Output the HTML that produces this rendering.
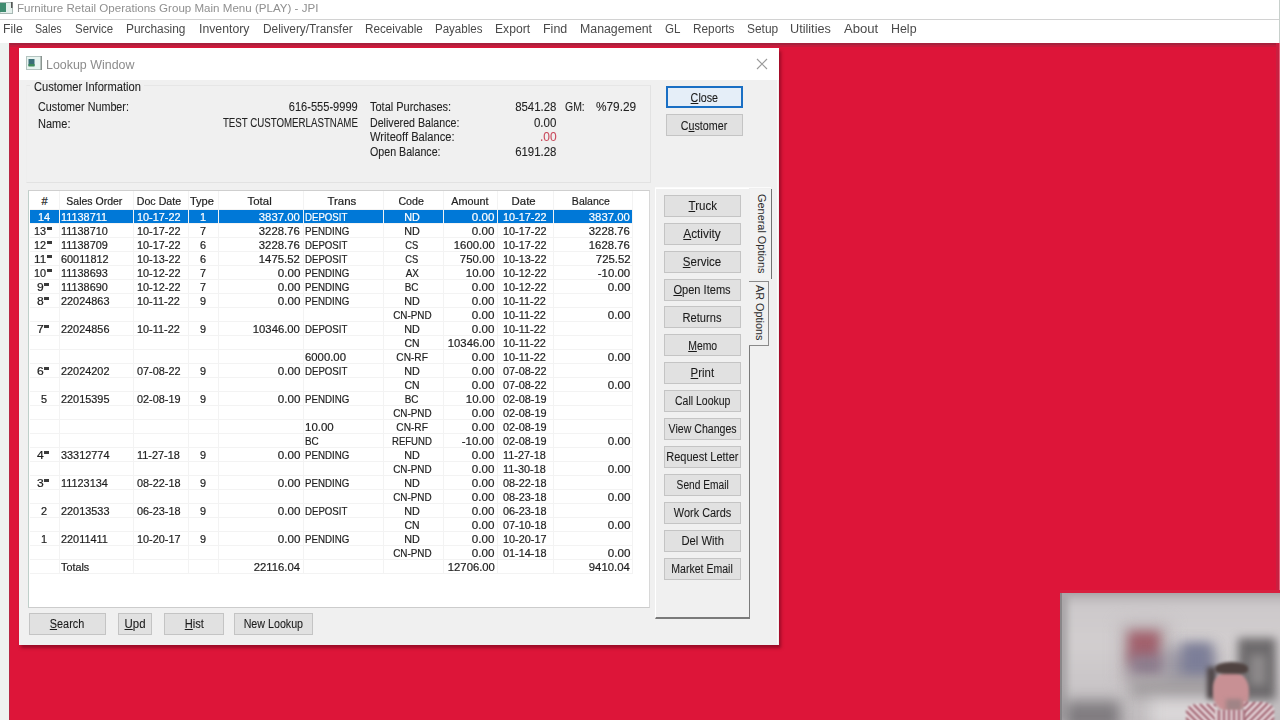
<!DOCTYPE html>
<html><head><meta charset="utf-8">
<style>
html,body{margin:0;padding:0}
body{width:1280px;height:720px;position:relative;overflow:hidden;background:#fff;font-family:"Liberation Sans", sans-serif}
body div{position:absolute}
.t{white-space:pre;-webkit-text-stroke:0.2px currentColor}
.t.ns{-webkit-text-stroke:0}
.t.b{-webkit-text-stroke:0.08px currentColor}
u{text-decoration:underline;text-underline-offset:1px}
</style></head><body>
<!-- top title bar -->
<div style="left:0;top:0;width:1280px;height:19px;background:#fff"></div>
<svg style="position:absolute;left:0;top:0" width="16" height="16"><rect x="0" y="2.5" width="12.5" height="11" fill="#e4f0ec" stroke="#a8b8b4" stroke-width="1"/><rect x="0" y="3" width="6" height="9" fill="#3f8c70"/><rect x="11" y="2" width="1.5" height="6" fill="#555"/></svg>
<div style="left:0;top:19px;width:1280px;height:1px;background:#d2d2d2"></div>
<div style="left:0;top:20px;width:1280px;height:23px;background:#fff"></div>
<div style="left:1279px;top:0;width:1px;height:43px;background:#c8d0cc"></div>
<!-- MDI client -->
<div style="left:0;top:43px;width:1280px;height:677px;background:#eef3f1"></div>
<div style="left:9px;top:43px;width:1271px;height:677px;background:#dd1539"></div>
<div style="left:9px;top:43px;width:1271px;height:2px;background:#a8203c"></div><div style="left:9px;top:45px;width:1271px;height:2px;background:#c41c3c"></div>
<div style="left:9px;top:43px;width:1px;height:677px;background:#b52a45"></div>
<div style="left:1276px;top:43px;width:3px;height:677px;background:#c92040"></div><div style="left:1279px;top:43px;width:1px;height:677px;background:#e8607a"></div>
<!-- lookup window -->
<div style="left:19px;top:48px;width:760px;height:597px;background:#f0f0f0;box-shadow:2px 3px 3px rgba(90,0,20,0.5)"></div>
<div style="left:19px;top:48px;width:760px;height:32px;background:#fff"></div>
<svg style="position:absolute;left:26px;top:56px" width="17" height="15"><rect x="0.5" y="0.5" width="15" height="13" fill="#e8f4f0" stroke="#b4c4c0" stroke-width="1"/><rect x="2.5" y="3" width="6" height="7" fill="#3a6e78"/><rect x="2.5" y="8" width="6" height="2.5" fill="#3d8a5a"/><rect x="14.5" y="0" width="1.5" height="14" fill="#8a9490"/></svg>
<svg style="position:absolute;left:756px;top:58px" width="12" height="12"><path d="M1 1L11 11M11 1L1 11" stroke="#9a9a9a" stroke-width="1.1"/></svg>
<!-- group box -->
<div style="left:26px;top:85px;width:623px;height:96px;border:1px solid #e2e2e2;border-top-color:#e6e6e6;border-left-color:#eeeeee"></div>
<div style="left:30px;top:80px;width:114px;height:12px;background:#f0f0f0"></div>
<!-- grid -->
<div style="left:28px;top:190px;width:622px;height:418px;background:#fff;border:1px solid #c4c4c4;border-color:#cfcfcf #d8d8d8 #cccccc #bfcfca;box-sizing:border-box"></div>
<div style="left:30px;top:209px;width:602px;height:1px;background:#f3f3f3"></div>
<div style="left:30px;top:223px;width:602px;height:1px;background:#f3f3f3"></div>
<div style="left:30px;top:237px;width:602px;height:1px;background:#f3f3f3"></div>
<div style="left:30px;top:251px;width:602px;height:1px;background:#f3f3f3"></div>
<div style="left:30px;top:265px;width:602px;height:1px;background:#f3f3f3"></div>
<div style="left:30px;top:279px;width:602px;height:1px;background:#f3f3f3"></div>
<div style="left:30px;top:293px;width:602px;height:1px;background:#f3f3f3"></div>
<div style="left:30px;top:307px;width:602px;height:1px;background:#f3f3f3"></div>
<div style="left:30px;top:321px;width:602px;height:1px;background:#f3f3f3"></div>
<div style="left:30px;top:335px;width:602px;height:1px;background:#f3f3f3"></div>
<div style="left:30px;top:349px;width:602px;height:1px;background:#f3f3f3"></div>
<div style="left:30px;top:363px;width:602px;height:1px;background:#f3f3f3"></div>
<div style="left:30px;top:377px;width:602px;height:1px;background:#f3f3f3"></div>
<div style="left:30px;top:391px;width:602px;height:1px;background:#f3f3f3"></div>
<div style="left:30px;top:405px;width:602px;height:1px;background:#f3f3f3"></div>
<div style="left:30px;top:419px;width:602px;height:1px;background:#f3f3f3"></div>
<div style="left:30px;top:433px;width:602px;height:1px;background:#f3f3f3"></div>
<div style="left:30px;top:447px;width:602px;height:1px;background:#f3f3f3"></div>
<div style="left:30px;top:461px;width:602px;height:1px;background:#f3f3f3"></div>
<div style="left:30px;top:475px;width:602px;height:1px;background:#f3f3f3"></div>
<div style="left:30px;top:489px;width:602px;height:1px;background:#f3f3f3"></div>
<div style="left:30px;top:503px;width:602px;height:1px;background:#f3f3f3"></div>
<div style="left:30px;top:517px;width:602px;height:1px;background:#f3f3f3"></div>
<div style="left:30px;top:531px;width:602px;height:1px;background:#f3f3f3"></div>
<div style="left:30px;top:545px;width:602px;height:1px;background:#f3f3f3"></div>
<div style="left:30px;top:559px;width:602px;height:1px;background:#f3f3f3"></div>
<div style="left:30px;top:573px;width:602px;height:1px;background:#f3f3f3"></div>
<div style="left:59px;top:191px;width:1px;height:383px;background:#f3f3f3"></div>
<div style="left:133px;top:191px;width:1px;height:383px;background:#f3f3f3"></div>
<div style="left:188px;top:191px;width:1px;height:383px;background:#f3f3f3"></div>
<div style="left:218px;top:191px;width:1px;height:383px;background:#f3f3f3"></div>
<div style="left:303px;top:191px;width:1px;height:383px;background:#f3f3f3"></div>
<div style="left:383px;top:191px;width:1px;height:383px;background:#f3f3f3"></div>
<div style="left:443px;top:191px;width:1px;height:383px;background:#f3f3f3"></div>
<div style="left:497px;top:191px;width:1px;height:383px;background:#f3f3f3"></div>
<div style="left:553px;top:191px;width:1px;height:383px;background:#f3f3f3"></div>
<div style="left:632px;top:191px;width:1px;height:383px;background:#f3f3f3"></div>
<div style="left:30px;top:210px;width:29px;height:13px;background:#0078d7"></div>
<div style="left:60px;top:210px;width:73px;height:13px;background:#0078d7"></div>
<div style="left:134px;top:210px;width:54px;height:13px;background:#0078d7"></div>
<div style="left:189px;top:210px;width:29px;height:13px;background:#0078d7"></div>
<div style="left:219px;top:210px;width:84px;height:13px;background:#0078d7"></div>
<div style="left:304px;top:210px;width:79px;height:13px;background:#0078d7"></div>
<div style="left:384px;top:210px;width:59px;height:13px;background:#0078d7"></div>
<div style="left:444px;top:210px;width:53px;height:13px;background:#0078d7"></div>
<div style="left:498px;top:210px;width:55px;height:13px;background:#0078d7"></div>
<div style="left:554px;top:210px;width:78px;height:13px;background:#0078d7"></div>
<div style="left:46.80px;top:227.20px;width:5px;height:3px;background:#3a3a3a;filter:blur(0.3px)"></div>
<div style="left:46.80px;top:241.20px;width:5px;height:3px;background:#3a3a3a;filter:blur(0.3px)"></div>
<div style="left:46.80px;top:255.20px;width:5px;height:3px;background:#3a3a3a;filter:blur(0.3px)"></div>
<div style="left:46.80px;top:269.20px;width:5px;height:3px;background:#3a3a3a;filter:blur(0.3px)"></div>
<div style="left:44.10px;top:283.20px;width:5px;height:3px;background:#3a3a3a;filter:blur(0.3px)"></div>
<div style="left:44.10px;top:297.20px;width:5px;height:3px;background:#3a3a3a;filter:blur(0.3px)"></div>
<div style="left:44.10px;top:325.20px;width:5px;height:3px;background:#3a3a3a;filter:blur(0.3px)"></div>
<div style="left:44.10px;top:367.20px;width:5px;height:3px;background:#3a3a3a;filter:blur(0.3px)"></div>
<div style="left:44.10px;top:451.20px;width:5px;height:3px;background:#3a3a3a;filter:blur(0.3px)"></div>
<div style="left:44.10px;top:479.20px;width:5px;height:3px;background:#3a3a3a;filter:blur(0.3px)"></div>
<!-- tab control -->
<div style="left:655px;top:188px;width:94px;height:431px;box-sizing:border-box;border:1px solid #fff;border-right:none;border-bottom:2px solid #7a7a7a"></div>
<div style="left:749px;top:346px;width:1px;height:273px;background:#7a7a7a"></div>
<div style="left:750px;top:189px;width:21px;height:90px;background:#f2f2f2;border-right:1px solid #707070"></div>
<div style="left:655px;top:187px;width:116px;height:1px;background:#fbfbfb"></div>
<div style="left:777px;top:80px;width:1px;height:564px;background:#fafafa"></div>
<div style="left:749px;top:281px;width:20px;height:65px;box-sizing:border-box;background:#f0f0f0;border:1px solid #8a8a8a;border-left:none"></div>
<div style="left:666px;top:86px;width:77px;height:22px;box-sizing:border-box;border:2px solid #1a6fc4;background:#e5eef8"></div>
<div style="left:666px;top:114px;width:77px;height:22px;box-sizing:border-box;border:1px solid #c4c4c4;background:#e1e1e1"></div>
<div style="left:664px;top:195px;width:77px;height:22px;box-sizing:border-box;border:1px solid #c4c4c4;background:#e1e1e1"></div>
<div style="left:664px;top:223px;width:77px;height:22px;box-sizing:border-box;border:1px solid #c4c4c4;background:#e1e1e1"></div>
<div style="left:664px;top:251px;width:77px;height:22px;box-sizing:border-box;border:1px solid #c4c4c4;background:#e1e1e1"></div>
<div style="left:664px;top:279px;width:77px;height:22px;box-sizing:border-box;border:1px solid #c4c4c4;background:#e1e1e1"></div>
<div style="left:664px;top:306px;width:77px;height:22px;box-sizing:border-box;border:1px solid #c4c4c4;background:#e1e1e1"></div>
<div style="left:664px;top:334px;width:77px;height:22px;box-sizing:border-box;border:1px solid #c4c4c4;background:#e1e1e1"></div>
<div style="left:664px;top:362px;width:77px;height:22px;box-sizing:border-box;border:1px solid #c4c4c4;background:#e1e1e1"></div>
<div style="left:664px;top:390px;width:77px;height:22px;box-sizing:border-box;border:1px solid #c4c4c4;background:#e1e1e1"></div>
<div style="left:664px;top:418px;width:77px;height:22px;box-sizing:border-box;border:1px solid #c4c4c4;background:#e1e1e1"></div>
<div style="left:664px;top:446px;width:77px;height:22px;box-sizing:border-box;border:1px solid #c4c4c4;background:#e1e1e1"></div>
<div style="left:664px;top:474px;width:77px;height:22px;box-sizing:border-box;border:1px solid #c4c4c4;background:#e1e1e1"></div>
<div style="left:664px;top:502px;width:77px;height:22px;box-sizing:border-box;border:1px solid #c4c4c4;background:#e1e1e1"></div>
<div style="left:664px;top:530px;width:77px;height:22px;box-sizing:border-box;border:1px solid #c4c4c4;background:#e1e1e1"></div>
<div style="left:664px;top:558px;width:77px;height:22px;box-sizing:border-box;border:1px solid #c4c4c4;background:#e1e1e1"></div>
<div style="left:29px;top:613px;width:77px;height:22px;box-sizing:border-box;border:1px solid #c4c4c4;background:#e1e1e1"></div>
<div style="left:118px;top:613px;width:34px;height:22px;box-sizing:border-box;border:1px solid #c4c4c4;background:#e1e1e1"></div>
<div style="left:164px;top:613px;width:60px;height:22px;box-sizing:border-box;border:1px solid #c4c4c4;background:#e1e1e1"></div>
<div style="left:234px;top:613px;width:79px;height:22px;box-sizing:border-box;border:1px solid #c4c4c4;background:#e1e1e1"></div>
<!-- webcam -->
<div style="left:1060px;top:590px;width:220px;height:3px;background:#d81f3f"></div>
<div style="left:1060px;top:593px;width:220px;height:127px;overflow:hidden;background:#cfcbcd">
  <div style="left:-10px;top:-10px;width:240px;height:147px;background:linear-gradient(180deg,#a8a2a5 0px,#a8a2a5 10px,#bcb7ba 14px,#cdc9cb 24px,#d2cecf 60px,#cac6c8 100px,#bdb9bb 147px);filter:blur(2px)"></div>
  <div style="left:-4px;top:0;width:12px;height:127px;background:#a9a5a7;filter:blur(3px)"></div>
  <div style="left:0;top:0;width:2px;height:127px;background:#8a8688"></div>
  <div style="left:60px;top:30px;width:50px;height:60px;background:#bdb5b8;filter:blur(8px)"></div>
  <div style="left:68px;top:38px;width:32px;height:32px;background:#a2606c;filter:blur(6px)"></div>
  <div style="left:70px;top:62px;width:36px;height:22px;background:#8a7a8c;filter:blur(7px)"></div>
  <div style="left:105px;top:55px;width:50px;height:40px;background:#9a96a2;filter:blur(8px)"></div>
  <div style="left:122px;top:50px;width:30px;height:34px;background:#7c7e98;filter:blur(6px)"></div>
  <div style="left:70px;top:85px;width:110px;height:20px;background:#a29ea0;filter:blur(7px)"></div>
  <div style="left:178px;top:45px;width:38px;height:62px;background:#6e6b6d;filter:blur(5px)"></div>
  <div style="left:190px;top:62px;width:16px;height:30px;background:#8c898a;filter:blur(4px)"></div>
  <div style="left:5px;top:108px;width:55px;height:30px;background:#807c80;filter:blur(7px)"></div>
  <div style="left:90px;top:108px;width:70px;height:25px;background:#dcd9da;filter:blur(8px)"></div>
  <div style="left:147px;top:74px;width:9px;height:32px;background:#4e4648;filter:blur(2.5px)"></div>
  <div style="left:153px;top:79px;width:36px;height:40px;background:#c89094;filter:blur(1.6px);border-radius:40% 45% 45% 45%"></div>
  <div style="left:155px;top:69px;width:33px;height:12px;background:#4f4240;filter:blur(1.8px);border-radius:50% 50% 30% 30%"></div>
  <div style="left:166px;top:106px;width:16px;height:12px;background:#a08486;filter:blur(2px)"></div>
  <div style="left:126px;top:111px;width:30px;height:20px;background:repeating-linear-gradient(45deg,#e8dade 0 3px,#9a5866 3px 5px);filter:blur(1.3px);border-radius:40% 0 0 0"></div>
  <div style="left:184px;top:109px;width:30px;height:22px;background:repeating-linear-gradient(-45deg,#e8dade 0 3px,#9a5866 3px 5px);filter:blur(1.3px);border-radius:0 40% 0 0"></div>
  <div style="left:155px;top:117px;width:30px;height:12px;background:repeating-linear-gradient(90deg,#dcc8cc 0 3px,#a06070 3px 5px);filter:blur(1.3px)"></div>
</div>
<div class="t ns" style="left:17.42px;top:2.93px;font-size:11.4px;line-height:11.4px;color:#8f8f8f;transform:scaleX(1.0157);transform-origin:left">Furniture Retail Operations Group Main Menu (PLAY) - JPI</div>
<div class="t ns" style="left:3.03px;top:22.74px;font-size:12px;line-height:12px;color:#4a4a4a;transform:scaleX(1.0179);transform-origin:left">File</div>
<div class="t ns" style="left:35.03px;top:22.74px;font-size:12px;line-height:12px;color:#4a4a4a;transform:scaleX(0.8887);transform-origin:left">Sales</div>
<div class="t ns" style="left:75.03px;top:22.74px;font-size:12px;line-height:12px;color:#4a4a4a;transform:scaleX(0.9544);transform-origin:left">Service</div>
<div class="t ns" style="left:126.28px;top:22.74px;font-size:12px;line-height:12px;color:#4a4a4a;transform:scaleX(0.9899);transform-origin:left">Purchasing</div>
<div class="t ns" style="left:199.28px;top:22.74px;font-size:12px;line-height:12px;color:#4a4a4a;transform:scaleX(1.0219);transform-origin:left">Inventory</div>
<div class="t ns" style="left:263.03px;top:22.74px;font-size:12px;line-height:12px;color:#4a4a4a;transform:scaleX(0.9865);transform-origin:left">Delivery/Transfer</div>
<div class="t ns" style="left:365.28px;top:22.74px;font-size:12px;line-height:12px;color:#4a4a4a;transform:scaleX(0.9741);transform-origin:left">Receivable</div>
<div class="t ns" style="left:434.78px;top:22.74px;font-size:12px;line-height:12px;color:#4a4a4a;transform:scaleX(0.9608);transform-origin:left">Payables</div>
<div class="t ns" style="left:495.28px;top:22.74px;font-size:12px;line-height:12px;color:#4a4a4a;transform:scaleX(1.0102);transform-origin:left">Export</div>
<div class="t ns" style="left:543.28px;top:22.74px;font-size:12px;line-height:12px;color:#4a4a4a;transform:scaleX(1.0384);transform-origin:left">Find</div>
<div class="t ns" style="left:579.68px;top:22.74px;font-size:12px;line-height:12px;color:#4a4a4a;transform:scaleX(1.0285);transform-origin:left">Management</div>
<div class="t ns" style="left:664.98px;top:22.74px;font-size:12px;line-height:12px;color:#4a4a4a;transform:scaleX(0.9641);transform-origin:left">GL</div>
<div class="t ns" style="left:692.88px;top:22.74px;font-size:12px;line-height:12px;color:#4a4a4a;transform:scaleX(0.9836);transform-origin:left">Reports</div>
<div class="t ns" style="left:746.78px;top:22.74px;font-size:12px;line-height:12px;color:#4a4a4a;transform:scaleX(0.9930);transform-origin:left">Setup</div>
<div class="t ns" style="left:790.48px;top:22.74px;font-size:12px;line-height:12px;color:#4a4a4a;transform:scaleX(1.0561);transform-origin:left">Utilities</div>
<div class="t ns" style="left:843.88px;top:22.74px;font-size:12px;line-height:12px;color:#4a4a4a;transform:scaleX(1.0919);transform-origin:left">About</div>
<div class="t ns" style="left:891.08px;top:22.74px;font-size:12px;line-height:12px;color:#4a4a4a;transform:scaleX(1.0345);transform-origin:left">Help</div>
<div class="t ns" style="left:45.78px;top:58.74px;font-size:12px;line-height:12px;color:#8c8c8c;transform:scaleX(1.0357);transform-origin:left">Lookup Window</div>
<div class="t b" style="left:34.28px;top:80.94px;font-size:12px;line-height:12px;color:#222;transform:scaleX(0.9268);transform-origin:left">Customer Information</div>
<div class="t b" style="left:37.58px;top:101.34px;font-size:12px;line-height:12px;color:#222;transform:scaleX(0.8971);transform-origin:left">Customer Number:</div>
<div class="t b" style="left:37.58px;top:117.64px;font-size:12px;line-height:12px;color:#222;transform:scaleX(0.9178);transform-origin:left">Name:</div>
<div class="t b" style="left:283.49px;top:101.34px;font-size:12px;line-height:12px;color:#222;transform:scaleX(0.9225);transform-origin:right">616-555-9999</div>
<div class="t b" style="left:191.30px;top:117.44px;font-size:12px;line-height:12px;color:#222;transform:scaleX(0.8090);transform-origin:right">TEST CUSTOMERLASTNAME</div>
<div class="t b" style="left:369.78px;top:101.14px;font-size:12px;line-height:12px;color:#222;transform:scaleX(0.9146);transform-origin:left">Total Purchases:</div>
<div class="t b" style="left:369.78px;top:116.94px;font-size:12px;line-height:12px;color:#222;transform:scaleX(0.8879);transform-origin:left">Delivered Balance:</div>
<div class="t b" style="left:369.78px;top:131.14px;font-size:12px;line-height:12px;color:#222;transform:scaleX(0.9307);transform-origin:left">Writeoff Balance:</div>
<div class="t b" style="left:369.78px;top:146.34px;font-size:12px;line-height:12px;color:#222;transform:scaleX(0.8885);transform-origin:left">Open Balance:</div>
<div class="t b" style="left:513.03px;top:101.14px;font-size:12px;line-height:12px;color:#222;transform:scaleX(0.9504);transform-origin:right">8541.28</div>
<div class="t b" style="left:533.06px;top:116.94px;font-size:12px;line-height:12px;color:#222;transform:scaleX(0.9606);transform-origin:right">0.00</div>
<div class="t b" style="left:539.73px;top:131.14px;font-size:12px;line-height:12px;color:#c8485a;transform:scaleX(0.9972);transform-origin:right">.00</div>
<div class="t b" style="left:513.03px;top:146.34px;font-size:12px;line-height:12px;color:#222;transform:scaleX(0.9504);transform-origin:right">6191.28</div>
<div class="t b" style="left:565.48px;top:101.14px;font-size:12px;line-height:12px;color:#222;transform:scaleX(0.8707);transform-origin:left">GM:</div>
<div class="t b" style="left:595.98px;top:101.14px;font-size:12px;line-height:12px;color:#222;transform:scaleX(0.9862);transform-origin:left">%79.29</div>
<div class="t b" style="left:689.16px;top:91.64px;font-size:12px;line-height:12px;color:#1a1a1a;transform:scaleX(0.8942);transform-origin:center"><u>C</u>lose</div>
<div class="t b" style="left:678.49px;top:119.64px;font-size:12px;line-height:12px;color:#1a1a1a;transform:scaleX(0.8928);transform-origin:center">C<u>u</u>stomer</div>
<div class="t b" style="left:687.72px;top:200.14px;font-size:12px;line-height:12px;color:#1a1a1a;transform:scaleX(0.9620);transform-origin:center"><u>T</u>ruck</div>
<div class="t b" style="left:683.49px;top:228.14px;font-size:12px;line-height:12px;color:#1a1a1a;transform:scaleX(0.9849);transform-origin:center"><u>A</u>ctivity</div>
<div class="t b" style="left:682.49px;top:256.14px;font-size:12px;line-height:12px;color:#1a1a1a;transform:scaleX(0.9606);transform-origin:center"><u>S</u>ervice</div>
<div class="t b" style="left:671.48px;top:284.14px;font-size:12px;line-height:12px;color:#1a1a1a;transform:scaleX(0.9228);transform-origin:center"><u>O</u>pen Items</div>
<div class="t b" style="left:681.48px;top:311.64px;font-size:12px;line-height:12px;color:#1a1a1a;transform:scaleX(0.9265);transform-origin:center">Returns</div>
<div class="t b" style="left:685.83px;top:339.64px;font-size:12px;line-height:12px;color:#1a1a1a;transform:scaleX(0.8679);transform-origin:center"><u>M</u>emo</div>
<div class="t b" style="left:690.16px;top:367.14px;font-size:12px;line-height:12px;color:#1a1a1a;transform:scaleX(0.9495);transform-origin:center"><u>P</u>rint</div>
<div class="t b" style="left:670.81px;top:395.14px;font-size:12px;line-height:12px;color:#1a1a1a;transform:scaleX(0.8748);transform-origin:center">Call Lookup</div>
<div class="t b" style="left:663.91px;top:423.14px;font-size:12px;line-height:12px;color:#1a1a1a;transform:scaleX(0.8830);transform-origin:center">View Changes</div>
<div class="t b" style="left:663.14px;top:451.14px;font-size:12px;line-height:12px;color:#1a1a1a;transform:scaleX(0.9164);transform-origin:center">Request Letter</div>
<div class="t b" style="left:671.81px;top:479.14px;font-size:12px;line-height:12px;color:#1a1a1a;transform:scaleX(0.8495);transform-origin:center">Send Email</div>
<div class="t b" style="left:670.94px;top:507.14px;font-size:12px;line-height:12px;color:#1a1a1a;transform:scaleX(0.9099);transform-origin:center">Work Cards</div>
<div class="t b" style="left:679.83px;top:535.14px;font-size:12px;line-height:12px;color:#1a1a1a;transform:scaleX(0.9360);transform-origin:center">Del With</div>
<div class="t b" style="left:667.49px;top:563.14px;font-size:12px;line-height:12px;color:#1a1a1a;transform:scaleX(0.8775);transform-origin:center">Market Email</div>
<div class="t b" style="left:48.48px;top:618.14px;font-size:12px;line-height:12px;color:#1a1a1a;transform:scaleX(0.9056);transform-origin:center"><u>S</u>earch</div>
<div class="t b" style="left:123.99px;top:618.14px;font-size:12px;line-height:12px;color:#1a1a1a;transform:scaleX(0.9511);transform-origin:center"><u>U</u>pd</div>
<div class="t b" style="left:183.66px;top:618.14px;font-size:12px;line-height:12px;color:#1a1a1a;transform:scaleX(0.9283);transform-origin:center"><u>H</u>ist</div>
<div class="t b" style="left:240.14px;top:618.14px;font-size:12px;line-height:12px;color:#1a1a1a;transform:scaleX(0.8909);transform-origin:center">New Lookup</div>
<div class="t " style="left:41.44px;top:196.13px;font-size:11px;line-height:11px;color:#222;transform:scaleX(1.0000);transform-origin:center">#</div>
<div class="t " style="left:65.25px;top:196.13px;font-size:11px;line-height:11px;color:#222;transform:scaleX(0.9543);transform-origin:center">Sales Order</div>
<div class="t " style="left:135.77px;top:196.13px;font-size:11px;line-height:11px;color:#222;transform:scaleX(0.9664);transform-origin:center">Doc Date</div>
<div class="t " style="left:190.47px;top:196.13px;font-size:11px;line-height:11px;color:#222;transform:scaleX(1.0088);transform-origin:center">Type</div>
<div class="t " style="left:247.77px;top:196.13px;font-size:11px;line-height:11px;color:#222;transform:scaleX(1.0374);transform-origin:center">Total</div>
<div class="t " style="left:327.84px;top:196.13px;font-size:11px;line-height:11px;color:#222;transform:scaleX(1.0397);transform-origin:center">Trans</div>
<div class="t " style="left:398.15px;top:196.13px;font-size:11px;line-height:11px;color:#222;transform:scaleX(0.9705);transform-origin:center">Code</div>
<div class="t " style="left:450.54px;top:196.13px;font-size:11px;line-height:11px;color:#222;transform:scaleX(0.9841);transform-origin:center">Amount</div>
<div class="t " style="left:512.48px;top:196.13px;font-size:11px;line-height:11px;color:#222;transform:scaleX(1.0331);transform-origin:center">Date</div>
<div class="t " style="left:571.42px;top:196.13px;font-size:11px;line-height:11px;color:#222;transform:scaleX(0.9561);transform-origin:center">Balance</div>
<div class="t " style="left:37.88px;top:212.03px;font-size:11px;line-height:11px;color:#fff;transform:scaleX(0.9900);transform-origin:center">14</div>
<div class="t " style="left:60.94px;top:212.03px;font-size:11px;line-height:11px;color:#fff;transform:scaleX(0.9900);transform-origin:left">11138711</div>
<div class="t " style="left:137.34px;top:212.03px;font-size:11px;line-height:11px;color:#fff;transform:scaleX(0.9900);transform-origin:left">10-17-22</div>
<div class="t " style="left:199.94px;top:212.03px;font-size:11px;line-height:11px;color:#fff;transform:scaleX(0.9900);transform-origin:center">1</div>
<div class="t " style="left:260.29px;top:212.03px;font-size:11px;line-height:11px;color:#fff;transform:scaleX(1.0302);transform-origin:right">3837.00</div>
<div class="t " style="left:304.94px;top:212.03px;font-size:11px;line-height:11px;color:#fff;transform:scaleX(0.8780);transform-origin:left">DEPOSIT</div>
<div class="t " style="left:404.05px;top:212.03px;font-size:11px;line-height:11px;color:#fff;transform:scaleX(0.9800);transform-origin:center">ND</div>
<div class="t " style="left:473.24px;top:212.03px;font-size:11px;line-height:11px;color:#fff;transform:scaleX(1.0560);transform-origin:right">0.00</div>
<div class="t " style="left:503.09px;top:212.03px;font-size:11px;line-height:11px;color:#fff;transform:scaleX(0.9900);transform-origin:left">10-17-22</div>
<div class="t " style="left:590.39px;top:212.03px;font-size:11px;line-height:11px;color:#fff;transform:scaleX(1.0302);transform-origin:right">3837.00</div>
<div class="t " style="left:34.44px;top:226.03px;font-size:11px;line-height:11px;color:#1e1e1e;transform:scaleX(0.9894);transform-origin:left">13</div>
<div class="t " style="left:60.94px;top:226.03px;font-size:11px;line-height:11px;color:#1e1e1e;transform:scaleX(0.9900);transform-origin:left">11138710</div>
<div class="t " style="left:137.34px;top:226.03px;font-size:11px;line-height:11px;color:#1e1e1e;transform:scaleX(0.9900);transform-origin:left">10-17-22</div>
<div class="t " style="left:199.94px;top:226.03px;font-size:11px;line-height:11px;color:#1e1e1e;transform:scaleX(0.9900);transform-origin:center">7</div>
<div class="t " style="left:260.29px;top:226.03px;font-size:11px;line-height:11px;color:#1e1e1e;transform:scaleX(1.0302);transform-origin:right">3228.76</div>
<div class="t " style="left:304.94px;top:226.03px;font-size:11px;line-height:11px;color:#1e1e1e;transform:scaleX(0.8860);transform-origin:left">PENDING</div>
<div class="t " style="left:404.05px;top:226.03px;font-size:11px;line-height:11px;color:#1e1e1e;transform:scaleX(0.9800);transform-origin:center">ND</div>
<div class="t " style="left:473.24px;top:226.03px;font-size:11px;line-height:11px;color:#1e1e1e;transform:scaleX(1.0560);transform-origin:right">0.00</div>
<div class="t " style="left:503.09px;top:226.03px;font-size:11px;line-height:11px;color:#1e1e1e;transform:scaleX(0.9900);transform-origin:left">10-17-22</div>
<div class="t " style="left:590.39px;top:226.03px;font-size:11px;line-height:11px;color:#1e1e1e;transform:scaleX(1.0302);transform-origin:right">3228.76</div>
<div class="t " style="left:34.44px;top:240.03px;font-size:11px;line-height:11px;color:#1e1e1e;transform:scaleX(0.9894);transform-origin:left">12</div>
<div class="t " style="left:60.94px;top:240.03px;font-size:11px;line-height:11px;color:#1e1e1e;transform:scaleX(0.9900);transform-origin:left">11138709</div>
<div class="t " style="left:137.34px;top:240.03px;font-size:11px;line-height:11px;color:#1e1e1e;transform:scaleX(0.9900);transform-origin:left">10-17-22</div>
<div class="t " style="left:199.94px;top:240.03px;font-size:11px;line-height:11px;color:#1e1e1e;transform:scaleX(0.9900);transform-origin:center">6</div>
<div class="t " style="left:260.29px;top:240.03px;font-size:11px;line-height:11px;color:#1e1e1e;transform:scaleX(1.0302);transform-origin:right">3228.76</div>
<div class="t " style="left:304.94px;top:240.03px;font-size:11px;line-height:11px;color:#1e1e1e;transform:scaleX(0.8780);transform-origin:left">DEPOSIT</div>
<div class="t " style="left:404.36px;top:240.03px;font-size:11px;line-height:11px;color:#1e1e1e;transform:scaleX(0.8500);transform-origin:center">CS</div>
<div class="t " style="left:454.89px;top:240.03px;font-size:11px;line-height:11px;color:#1e1e1e;transform:scaleX(1.0302);transform-origin:right">1600.00</div>
<div class="t " style="left:503.09px;top:240.03px;font-size:11px;line-height:11px;color:#1e1e1e;transform:scaleX(0.9900);transform-origin:left">10-17-22</div>
<div class="t " style="left:590.39px;top:240.03px;font-size:11px;line-height:11px;color:#1e1e1e;transform:scaleX(1.0302);transform-origin:right">1628.76</div>
<div class="t " style="left:34.44px;top:254.03px;font-size:11px;line-height:11px;color:#1e1e1e;transform:scaleX(1.0611);transform-origin:left">11</div>
<div class="t " style="left:60.94px;top:254.03px;font-size:11px;line-height:11px;color:#1e1e1e;transform:scaleX(0.9900);transform-origin:left">60011812</div>
<div class="t " style="left:137.34px;top:254.03px;font-size:11px;line-height:11px;color:#1e1e1e;transform:scaleX(0.9900);transform-origin:left">10-13-22</div>
<div class="t " style="left:199.94px;top:254.03px;font-size:11px;line-height:11px;color:#1e1e1e;transform:scaleX(0.9900);transform-origin:center">6</div>
<div class="t " style="left:260.29px;top:254.03px;font-size:11px;line-height:11px;color:#1e1e1e;transform:scaleX(1.0302);transform-origin:right">1475.52</div>
<div class="t " style="left:304.94px;top:254.03px;font-size:11px;line-height:11px;color:#1e1e1e;transform:scaleX(0.8780);transform-origin:left">DEPOSIT</div>
<div class="t " style="left:404.36px;top:254.03px;font-size:11px;line-height:11px;color:#1e1e1e;transform:scaleX(0.8500);transform-origin:center">CS</div>
<div class="t " style="left:461.00px;top:254.03px;font-size:11px;line-height:11px;color:#1e1e1e;transform:scaleX(1.0357);transform-origin:right">750.00</div>
<div class="t " style="left:503.09px;top:254.03px;font-size:11px;line-height:11px;color:#1e1e1e;transform:scaleX(0.9900);transform-origin:left">10-13-22</div>
<div class="t " style="left:596.50px;top:254.03px;font-size:11px;line-height:11px;color:#1e1e1e;transform:scaleX(1.0357);transform-origin:right">725.52</div>
<div class="t " style="left:34.44px;top:268.03px;font-size:11px;line-height:11px;color:#1e1e1e;transform:scaleX(0.9894);transform-origin:left">10</div>
<div class="t " style="left:60.94px;top:268.03px;font-size:11px;line-height:11px;color:#1e1e1e;transform:scaleX(0.9900);transform-origin:left">11138693</div>
<div class="t " style="left:137.34px;top:268.03px;font-size:11px;line-height:11px;color:#1e1e1e;transform:scaleX(0.9900);transform-origin:left">10-12-22</div>
<div class="t " style="left:199.94px;top:268.03px;font-size:11px;line-height:11px;color:#1e1e1e;transform:scaleX(0.9900);transform-origin:center">7</div>
<div class="t " style="left:278.64px;top:268.03px;font-size:11px;line-height:11px;color:#1e1e1e;transform:scaleX(1.0560);transform-origin:right">0.00</div>
<div class="t " style="left:304.94px;top:268.03px;font-size:11px;line-height:11px;color:#1e1e1e;transform:scaleX(0.8860);transform-origin:left">PENDING</div>
<div class="t " style="left:404.66px;top:268.03px;font-size:11px;line-height:11px;color:#1e1e1e;transform:scaleX(0.9000);transform-origin:center">AX</div>
<div class="t " style="left:467.13px;top:268.03px;font-size:11px;line-height:11px;color:#1e1e1e;transform:scaleX(1.0436);transform-origin:right">10.00</div>
<div class="t " style="left:503.09px;top:268.03px;font-size:11px;line-height:11px;color:#1e1e1e;transform:scaleX(0.9900);transform-origin:left">10-12-22</div>
<div class="t " style="left:598.96px;top:268.03px;font-size:11px;line-height:11px;color:#1e1e1e;transform:scaleX(1.0385);transform-origin:right">-10.00</div>
<div class="t " style="left:37.14px;top:282.03px;font-size:11px;line-height:11px;color:#1e1e1e;transform:scaleX(1.0971);transform-origin:left">9</div>
<div class="t " style="left:60.94px;top:282.03px;font-size:11px;line-height:11px;color:#1e1e1e;transform:scaleX(0.9900);transform-origin:left">11138690</div>
<div class="t " style="left:137.34px;top:282.03px;font-size:11px;line-height:11px;color:#1e1e1e;transform:scaleX(0.9900);transform-origin:left">10-12-22</div>
<div class="t " style="left:199.94px;top:282.03px;font-size:11px;line-height:11px;color:#1e1e1e;transform:scaleX(0.9900);transform-origin:center">7</div>
<div class="t " style="left:278.64px;top:282.03px;font-size:11px;line-height:11px;color:#1e1e1e;transform:scaleX(1.0560);transform-origin:right">0.00</div>
<div class="t " style="left:304.94px;top:282.03px;font-size:11px;line-height:11px;color:#1e1e1e;transform:scaleX(0.8860);transform-origin:left">PENDING</div>
<div class="t " style="left:404.36px;top:282.03px;font-size:11px;line-height:11px;color:#1e1e1e;transform:scaleX(0.9000);transform-origin:center">BC</div>
<div class="t " style="left:473.24px;top:282.03px;font-size:11px;line-height:11px;color:#1e1e1e;transform:scaleX(1.0560);transform-origin:right">0.00</div>
<div class="t " style="left:503.09px;top:282.03px;font-size:11px;line-height:11px;color:#1e1e1e;transform:scaleX(0.9900);transform-origin:left">10-12-22</div>
<div class="t " style="left:608.74px;top:282.03px;font-size:11px;line-height:11px;color:#1e1e1e;transform:scaleX(1.0560);transform-origin:right">0.00</div>
<div class="t " style="left:37.14px;top:296.03px;font-size:11px;line-height:11px;color:#1e1e1e;transform:scaleX(1.0971);transform-origin:left">8</div>
<div class="t " style="left:60.94px;top:296.03px;font-size:11px;line-height:11px;color:#1e1e1e;transform:scaleX(0.9900);transform-origin:left">22024863</div>
<div class="t " style="left:137.34px;top:296.03px;font-size:11px;line-height:11px;color:#1e1e1e;transform:scaleX(0.9900);transform-origin:left">10-11-22</div>
<div class="t " style="left:199.94px;top:296.03px;font-size:11px;line-height:11px;color:#1e1e1e;transform:scaleX(0.9900);transform-origin:center">9</div>
<div class="t " style="left:278.64px;top:296.03px;font-size:11px;line-height:11px;color:#1e1e1e;transform:scaleX(1.0560);transform-origin:right">0.00</div>
<div class="t " style="left:304.94px;top:296.03px;font-size:11px;line-height:11px;color:#1e1e1e;transform:scaleX(0.8860);transform-origin:left">PENDING</div>
<div class="t " style="left:404.05px;top:296.03px;font-size:11px;line-height:11px;color:#1e1e1e;transform:scaleX(0.9800);transform-origin:center">ND</div>
<div class="t " style="left:473.24px;top:296.03px;font-size:11px;line-height:11px;color:#1e1e1e;transform:scaleX(1.0560);transform-origin:right">0.00</div>
<div class="t " style="left:503.09px;top:296.03px;font-size:11px;line-height:11px;color:#1e1e1e;transform:scaleX(0.9900);transform-origin:left">10-11-22</div>
<div class="t " style="left:390.61px;top:310.03px;font-size:11px;line-height:11px;color:#1e1e1e;transform:scaleX(0.9000);transform-origin:center">CN-PND</div>
<div class="t " style="left:473.24px;top:310.03px;font-size:11px;line-height:11px;color:#1e1e1e;transform:scaleX(1.0560);transform-origin:right">0.00</div>
<div class="t " style="left:503.09px;top:310.03px;font-size:11px;line-height:11px;color:#1e1e1e;transform:scaleX(0.9900);transform-origin:left">10-11-22</div>
<div class="t " style="left:608.74px;top:310.03px;font-size:11px;line-height:11px;color:#1e1e1e;transform:scaleX(1.0560);transform-origin:right">0.00</div>
<div class="t " style="left:37.14px;top:324.03px;font-size:11px;line-height:11px;color:#1e1e1e;transform:scaleX(1.0971);transform-origin:left">7</div>
<div class="t " style="left:60.94px;top:324.03px;font-size:11px;line-height:11px;color:#1e1e1e;transform:scaleX(0.9900);transform-origin:left">22024856</div>
<div class="t " style="left:137.34px;top:324.03px;font-size:11px;line-height:11px;color:#1e1e1e;transform:scaleX(0.9900);transform-origin:left">10-11-22</div>
<div class="t " style="left:199.94px;top:324.03px;font-size:11px;line-height:11px;color:#1e1e1e;transform:scaleX(0.9900);transform-origin:center">9</div>
<div class="t " style="left:254.17px;top:324.03px;font-size:11px;line-height:11px;color:#1e1e1e;transform:scaleX(1.0261);transform-origin:right">10346.00</div>
<div class="t " style="left:304.94px;top:324.03px;font-size:11px;line-height:11px;color:#1e1e1e;transform:scaleX(0.8780);transform-origin:left">DEPOSIT</div>
<div class="t " style="left:404.05px;top:324.03px;font-size:11px;line-height:11px;color:#1e1e1e;transform:scaleX(0.9800);transform-origin:center">ND</div>
<div class="t " style="left:473.24px;top:324.03px;font-size:11px;line-height:11px;color:#1e1e1e;transform:scaleX(1.0560);transform-origin:right">0.00</div>
<div class="t " style="left:503.09px;top:324.03px;font-size:11px;line-height:11px;color:#1e1e1e;transform:scaleX(0.9900);transform-origin:left">10-11-22</div>
<div class="t " style="left:404.05px;top:338.03px;font-size:11px;line-height:11px;color:#1e1e1e;transform:scaleX(0.9500);transform-origin:center">CN</div>
<div class="t " style="left:448.77px;top:338.03px;font-size:11px;line-height:11px;color:#1e1e1e;transform:scaleX(1.0261);transform-origin:right">10346.00</div>
<div class="t " style="left:503.09px;top:338.03px;font-size:11px;line-height:11px;color:#1e1e1e;transform:scaleX(0.9900);transform-origin:left">10-11-22</div>
<div class="t " style="left:304.94px;top:352.03px;font-size:11px;line-height:11px;color:#1e1e1e;transform:scaleX(1.0302);transform-origin:left">6000.00</div>
<div class="t " style="left:394.89px;top:352.03px;font-size:11px;line-height:11px;color:#1e1e1e;transform:scaleX(0.9200);transform-origin:center">CN-RF</div>
<div class="t " style="left:473.24px;top:352.03px;font-size:11px;line-height:11px;color:#1e1e1e;transform:scaleX(1.0560);transform-origin:right">0.00</div>
<div class="t " style="left:503.09px;top:352.03px;font-size:11px;line-height:11px;color:#1e1e1e;transform:scaleX(0.9900);transform-origin:left">10-11-22</div>
<div class="t " style="left:608.74px;top:352.03px;font-size:11px;line-height:11px;color:#1e1e1e;transform:scaleX(1.0560);transform-origin:right">0.00</div>
<div class="t " style="left:37.14px;top:366.03px;font-size:11px;line-height:11px;color:#1e1e1e;transform:scaleX(1.0971);transform-origin:left">6</div>
<div class="t " style="left:60.94px;top:366.03px;font-size:11px;line-height:11px;color:#1e1e1e;transform:scaleX(0.9900);transform-origin:left">22024202</div>
<div class="t " style="left:137.34px;top:366.03px;font-size:11px;line-height:11px;color:#1e1e1e;transform:scaleX(0.9900);transform-origin:left">07-08-22</div>
<div class="t " style="left:199.94px;top:366.03px;font-size:11px;line-height:11px;color:#1e1e1e;transform:scaleX(0.9900);transform-origin:center">9</div>
<div class="t " style="left:278.64px;top:366.03px;font-size:11px;line-height:11px;color:#1e1e1e;transform:scaleX(1.0560);transform-origin:right">0.00</div>
<div class="t " style="left:304.94px;top:366.03px;font-size:11px;line-height:11px;color:#1e1e1e;transform:scaleX(0.8780);transform-origin:left">DEPOSIT</div>
<div class="t " style="left:404.05px;top:366.03px;font-size:11px;line-height:11px;color:#1e1e1e;transform:scaleX(0.9800);transform-origin:center">ND</div>
<div class="t " style="left:473.24px;top:366.03px;font-size:11px;line-height:11px;color:#1e1e1e;transform:scaleX(1.0560);transform-origin:right">0.00</div>
<div class="t " style="left:503.09px;top:366.03px;font-size:11px;line-height:11px;color:#1e1e1e;transform:scaleX(0.9900);transform-origin:left">07-08-22</div>
<div class="t " style="left:404.05px;top:380.03px;font-size:11px;line-height:11px;color:#1e1e1e;transform:scaleX(0.9500);transform-origin:center">CN</div>
<div class="t " style="left:473.24px;top:380.03px;font-size:11px;line-height:11px;color:#1e1e1e;transform:scaleX(1.0560);transform-origin:right">0.00</div>
<div class="t " style="left:503.09px;top:380.03px;font-size:11px;line-height:11px;color:#1e1e1e;transform:scaleX(0.9900);transform-origin:left">07-08-22</div>
<div class="t " style="left:608.74px;top:380.03px;font-size:11px;line-height:11px;color:#1e1e1e;transform:scaleX(1.0560);transform-origin:right">0.00</div>
<div class="t " style="left:40.94px;top:394.03px;font-size:11px;line-height:11px;color:#1e1e1e;transform:scaleX(0.9900);transform-origin:center">5</div>
<div class="t " style="left:60.94px;top:394.03px;font-size:11px;line-height:11px;color:#1e1e1e;transform:scaleX(0.9900);transform-origin:left">22015395</div>
<div class="t " style="left:137.34px;top:394.03px;font-size:11px;line-height:11px;color:#1e1e1e;transform:scaleX(0.9900);transform-origin:left">02-08-19</div>
<div class="t " style="left:199.94px;top:394.03px;font-size:11px;line-height:11px;color:#1e1e1e;transform:scaleX(0.9900);transform-origin:center">9</div>
<div class="t " style="left:278.64px;top:394.03px;font-size:11px;line-height:11px;color:#1e1e1e;transform:scaleX(1.0560);transform-origin:right">0.00</div>
<div class="t " style="left:304.94px;top:394.03px;font-size:11px;line-height:11px;color:#1e1e1e;transform:scaleX(0.8860);transform-origin:left">PENDING</div>
<div class="t " style="left:404.36px;top:394.03px;font-size:11px;line-height:11px;color:#1e1e1e;transform:scaleX(0.9000);transform-origin:center">BC</div>
<div class="t " style="left:467.13px;top:394.03px;font-size:11px;line-height:11px;color:#1e1e1e;transform:scaleX(1.0436);transform-origin:right">10.00</div>
<div class="t " style="left:503.09px;top:394.03px;font-size:11px;line-height:11px;color:#1e1e1e;transform:scaleX(0.9900);transform-origin:left">02-08-19</div>
<div class="t " style="left:390.61px;top:408.03px;font-size:11px;line-height:11px;color:#1e1e1e;transform:scaleX(0.9000);transform-origin:center">CN-PND</div>
<div class="t " style="left:473.24px;top:408.03px;font-size:11px;line-height:11px;color:#1e1e1e;transform:scaleX(1.0560);transform-origin:right">0.00</div>
<div class="t " style="left:503.09px;top:408.03px;font-size:11px;line-height:11px;color:#1e1e1e;transform:scaleX(0.9900);transform-origin:left">02-08-19</div>
<div class="t " style="left:304.94px;top:422.03px;font-size:11px;line-height:11px;color:#1e1e1e;transform:scaleX(1.0436);transform-origin:left">10.00</div>
<div class="t " style="left:394.89px;top:422.03px;font-size:11px;line-height:11px;color:#1e1e1e;transform:scaleX(0.9200);transform-origin:center">CN-RF</div>
<div class="t " style="left:473.24px;top:422.03px;font-size:11px;line-height:11px;color:#1e1e1e;transform:scaleX(1.0560);transform-origin:right">0.00</div>
<div class="t " style="left:503.09px;top:422.03px;font-size:11px;line-height:11px;color:#1e1e1e;transform:scaleX(0.9900);transform-origin:left">02-08-19</div>
<div class="t " style="left:304.94px;top:436.03px;font-size:11px;line-height:11px;color:#1e1e1e;transform:scaleX(0.9000);transform-origin:left">BC</div>
<div class="t " style="left:389.08px;top:436.03px;font-size:11px;line-height:11px;color:#1e1e1e;transform:scaleX(0.8700);transform-origin:center">REFUND</div>
<div class="t " style="left:463.46px;top:436.03px;font-size:11px;line-height:11px;color:#1e1e1e;transform:scaleX(1.0385);transform-origin:right">-10.00</div>
<div class="t " style="left:503.09px;top:436.03px;font-size:11px;line-height:11px;color:#1e1e1e;transform:scaleX(0.9900);transform-origin:left">02-08-19</div>
<div class="t " style="left:608.74px;top:436.03px;font-size:11px;line-height:11px;color:#1e1e1e;transform:scaleX(1.0560);transform-origin:right">0.00</div>
<div class="t " style="left:37.14px;top:450.03px;font-size:11px;line-height:11px;color:#1e1e1e;transform:scaleX(1.0971);transform-origin:left">4</div>
<div class="t " style="left:60.94px;top:450.03px;font-size:11px;line-height:11px;color:#1e1e1e;transform:scaleX(0.9900);transform-origin:left">33312774</div>
<div class="t " style="left:137.34px;top:450.03px;font-size:11px;line-height:11px;color:#1e1e1e;transform:scaleX(0.9900);transform-origin:left">11-27-18</div>
<div class="t " style="left:199.94px;top:450.03px;font-size:11px;line-height:11px;color:#1e1e1e;transform:scaleX(0.9900);transform-origin:center">9</div>
<div class="t " style="left:278.64px;top:450.03px;font-size:11px;line-height:11px;color:#1e1e1e;transform:scaleX(1.0560);transform-origin:right">0.00</div>
<div class="t " style="left:304.94px;top:450.03px;font-size:11px;line-height:11px;color:#1e1e1e;transform:scaleX(0.8860);transform-origin:left">PENDING</div>
<div class="t " style="left:404.05px;top:450.03px;font-size:11px;line-height:11px;color:#1e1e1e;transform:scaleX(0.9800);transform-origin:center">ND</div>
<div class="t " style="left:473.24px;top:450.03px;font-size:11px;line-height:11px;color:#1e1e1e;transform:scaleX(1.0560);transform-origin:right">0.00</div>
<div class="t " style="left:503.09px;top:450.03px;font-size:11px;line-height:11px;color:#1e1e1e;transform:scaleX(0.9900);transform-origin:left">11-27-18</div>
<div class="t " style="left:390.61px;top:464.03px;font-size:11px;line-height:11px;color:#1e1e1e;transform:scaleX(0.9000);transform-origin:center">CN-PND</div>
<div class="t " style="left:473.24px;top:464.03px;font-size:11px;line-height:11px;color:#1e1e1e;transform:scaleX(1.0560);transform-origin:right">0.00</div>
<div class="t " style="left:503.09px;top:464.03px;font-size:11px;line-height:11px;color:#1e1e1e;transform:scaleX(0.9900);transform-origin:left">11-30-18</div>
<div class="t " style="left:608.74px;top:464.03px;font-size:11px;line-height:11px;color:#1e1e1e;transform:scaleX(1.0560);transform-origin:right">0.00</div>
<div class="t " style="left:37.14px;top:478.03px;font-size:11px;line-height:11px;color:#1e1e1e;transform:scaleX(1.0971);transform-origin:left">3</div>
<div class="t " style="left:60.94px;top:478.03px;font-size:11px;line-height:11px;color:#1e1e1e;transform:scaleX(0.9900);transform-origin:left">11123134</div>
<div class="t " style="left:137.34px;top:478.03px;font-size:11px;line-height:11px;color:#1e1e1e;transform:scaleX(0.9900);transform-origin:left">08-22-18</div>
<div class="t " style="left:199.94px;top:478.03px;font-size:11px;line-height:11px;color:#1e1e1e;transform:scaleX(0.9900);transform-origin:center">9</div>
<div class="t " style="left:278.64px;top:478.03px;font-size:11px;line-height:11px;color:#1e1e1e;transform:scaleX(1.0560);transform-origin:right">0.00</div>
<div class="t " style="left:304.94px;top:478.03px;font-size:11px;line-height:11px;color:#1e1e1e;transform:scaleX(0.8860);transform-origin:left">PENDING</div>
<div class="t " style="left:404.05px;top:478.03px;font-size:11px;line-height:11px;color:#1e1e1e;transform:scaleX(0.9800);transform-origin:center">ND</div>
<div class="t " style="left:473.24px;top:478.03px;font-size:11px;line-height:11px;color:#1e1e1e;transform:scaleX(1.0560);transform-origin:right">0.00</div>
<div class="t " style="left:503.09px;top:478.03px;font-size:11px;line-height:11px;color:#1e1e1e;transform:scaleX(0.9900);transform-origin:left">08-22-18</div>
<div class="t " style="left:390.61px;top:492.03px;font-size:11px;line-height:11px;color:#1e1e1e;transform:scaleX(0.9000);transform-origin:center">CN-PND</div>
<div class="t " style="left:473.24px;top:492.03px;font-size:11px;line-height:11px;color:#1e1e1e;transform:scaleX(1.0560);transform-origin:right">0.00</div>
<div class="t " style="left:503.09px;top:492.03px;font-size:11px;line-height:11px;color:#1e1e1e;transform:scaleX(0.9900);transform-origin:left">08-23-18</div>
<div class="t " style="left:608.74px;top:492.03px;font-size:11px;line-height:11px;color:#1e1e1e;transform:scaleX(1.0560);transform-origin:right">0.00</div>
<div class="t " style="left:40.94px;top:506.03px;font-size:11px;line-height:11px;color:#1e1e1e;transform:scaleX(0.9900);transform-origin:center">2</div>
<div class="t " style="left:60.94px;top:506.03px;font-size:11px;line-height:11px;color:#1e1e1e;transform:scaleX(0.9900);transform-origin:left">22013533</div>
<div class="t " style="left:137.34px;top:506.03px;font-size:11px;line-height:11px;color:#1e1e1e;transform:scaleX(0.9900);transform-origin:left">06-23-18</div>
<div class="t " style="left:199.94px;top:506.03px;font-size:11px;line-height:11px;color:#1e1e1e;transform:scaleX(0.9900);transform-origin:center">9</div>
<div class="t " style="left:278.64px;top:506.03px;font-size:11px;line-height:11px;color:#1e1e1e;transform:scaleX(1.0560);transform-origin:right">0.00</div>
<div class="t " style="left:304.94px;top:506.03px;font-size:11px;line-height:11px;color:#1e1e1e;transform:scaleX(0.8780);transform-origin:left">DEPOSIT</div>
<div class="t " style="left:404.05px;top:506.03px;font-size:11px;line-height:11px;color:#1e1e1e;transform:scaleX(0.9800);transform-origin:center">ND</div>
<div class="t " style="left:473.24px;top:506.03px;font-size:11px;line-height:11px;color:#1e1e1e;transform:scaleX(1.0560);transform-origin:right">0.00</div>
<div class="t " style="left:503.09px;top:506.03px;font-size:11px;line-height:11px;color:#1e1e1e;transform:scaleX(0.9900);transform-origin:left">06-23-18</div>
<div class="t " style="left:404.05px;top:520.03px;font-size:11px;line-height:11px;color:#1e1e1e;transform:scaleX(0.9500);transform-origin:center">CN</div>
<div class="t " style="left:473.24px;top:520.03px;font-size:11px;line-height:11px;color:#1e1e1e;transform:scaleX(1.0560);transform-origin:right">0.00</div>
<div class="t " style="left:503.09px;top:520.03px;font-size:11px;line-height:11px;color:#1e1e1e;transform:scaleX(0.9900);transform-origin:left">07-10-18</div>
<div class="t " style="left:608.74px;top:520.03px;font-size:11px;line-height:11px;color:#1e1e1e;transform:scaleX(1.0560);transform-origin:right">0.00</div>
<div class="t " style="left:40.94px;top:534.03px;font-size:11px;line-height:11px;color:#1e1e1e;transform:scaleX(0.9900);transform-origin:center">1</div>
<div class="t " style="left:60.94px;top:534.03px;font-size:11px;line-height:11px;color:#1e1e1e;transform:scaleX(0.9900);transform-origin:left">22011411</div>
<div class="t " style="left:137.34px;top:534.03px;font-size:11px;line-height:11px;color:#1e1e1e;transform:scaleX(0.9900);transform-origin:left">10-20-17</div>
<div class="t " style="left:199.94px;top:534.03px;font-size:11px;line-height:11px;color:#1e1e1e;transform:scaleX(0.9900);transform-origin:center">9</div>
<div class="t " style="left:278.64px;top:534.03px;font-size:11px;line-height:11px;color:#1e1e1e;transform:scaleX(1.0560);transform-origin:right">0.00</div>
<div class="t " style="left:304.94px;top:534.03px;font-size:11px;line-height:11px;color:#1e1e1e;transform:scaleX(0.8860);transform-origin:left">PENDING</div>
<div class="t " style="left:404.05px;top:534.03px;font-size:11px;line-height:11px;color:#1e1e1e;transform:scaleX(0.9800);transform-origin:center">ND</div>
<div class="t " style="left:473.24px;top:534.03px;font-size:11px;line-height:11px;color:#1e1e1e;transform:scaleX(1.0560);transform-origin:right">0.00</div>
<div class="t " style="left:503.09px;top:534.03px;font-size:11px;line-height:11px;color:#1e1e1e;transform:scaleX(0.9900);transform-origin:left">10-20-17</div>
<div class="t " style="left:390.61px;top:548.03px;font-size:11px;line-height:11px;color:#1e1e1e;transform:scaleX(0.9000);transform-origin:center">CN-PND</div>
<div class="t " style="left:473.24px;top:548.03px;font-size:11px;line-height:11px;color:#1e1e1e;transform:scaleX(1.0560);transform-origin:right">0.00</div>
<div class="t " style="left:503.09px;top:548.03px;font-size:11px;line-height:11px;color:#1e1e1e;transform:scaleX(0.9900);transform-origin:left">01-14-18</div>
<div class="t " style="left:608.74px;top:548.03px;font-size:11px;line-height:11px;color:#1e1e1e;transform:scaleX(1.0560);transform-origin:right">0.00</div>
<div class="t " style="left:60.94px;top:562.03px;font-size:11px;line-height:11px;color:#1e1e1e;transform:scaleX(0.9800);transform-origin:left">Totals</div>
<div class="t " style="left:254.98px;top:562.03px;font-size:11px;line-height:11px;color:#1e1e1e;transform:scaleX(1.0266);transform-origin:right">22116.04</div>
<div class="t " style="left:448.77px;top:562.03px;font-size:11px;line-height:11px;color:#1e1e1e;transform:scaleX(1.0261);transform-origin:right">12706.00</div>
<div class="t " style="left:590.39px;top:562.03px;font-size:11px;line-height:11px;color:#1e1e1e;transform:scaleX(1.0302);transform-origin:right">9410.04</div>
<div class="t rot ns" style="left:718.73px;top:227.65px;font-size:11.5px;line-height:11.5px;color:#2a2a2a;transform:rotate(90deg) scaleX(0.9478);transform-origin:center">General Options</div>
<div class="t rot ns" style="left:730.19px;top:307.25px;font-size:11.5px;line-height:11.5px;color:#2a2a2a;transform:rotate(90deg) scaleX(0.9416);transform-origin:center">AR Options</div>
</body></html>
